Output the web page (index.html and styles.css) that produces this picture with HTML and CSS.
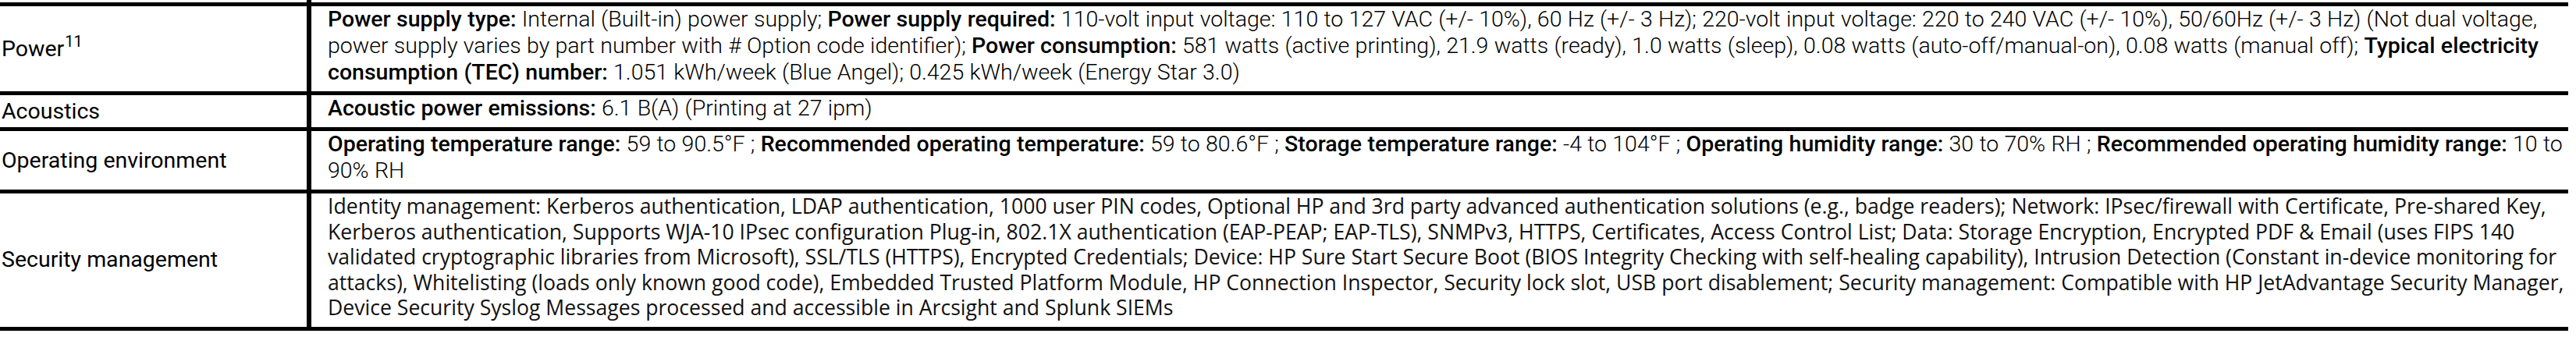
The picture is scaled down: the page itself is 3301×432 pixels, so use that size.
FILE: index.html
```html
<!DOCTYPE html>
<html lang="en">
<head>
<meta charset="utf-8">
<title>Specifications</title>
<link rel="stylesheet" href="styles.css">
</head>
<body>
<div class="spec">
  <div class="row stub"><div class="label"></div><div class="value"></div></div>
  <div class="row">
    <div class="label"><span>Power<sup>11</sup></span></div>
    <div class="value"><b>Power supply type:</b> Internal (Built-in) power supply; <b>Power supply required:</b> 110-volt input voltage: 110 to 127 VAC (+/- 10%), 60 Hz (+/- 3 Hz); 220-volt input voltage: 220 to 240 VAC (+/- 10%), 50/60Hz (+/- 3 Hz) (Not dual voltage,<br>power supply varies by part number with # Option code identifier); <b>Power consumption:</b> 581 watts (active printing), 21.9 watts (ready), 1.0 watts (sleep), 0.08 watts (auto-off/manual-on), 0.08 watts (manual off); <b>Typical electricity</b><br><b>consumption (TEC) number:</b> 1.051 kWh/week (Blue Angel); 0.425 kWh/week (Energy Star 3.0)</div>
  </div>
  <div class="row">
    <div class="label">Acoustics</div>
    <div class="value"><b>Acoustic power emissions:</b> 6.1 B(A) (Printing at 27 ipm)</div>
  </div>
  <div class="row">
    <div class="label">Operating environment</div>
    <div class="value"><b>Operating temperature range:</b> 59 to 90.5°F ; <b>Recommended operating temperature:</b> 59 to 80.6°F ; <b>Storage temperature range:</b> -4 to 104°F ; <b>Operating humidity range:</b> 30 to 70% RH ; <b>Recommended operating humidity range:</b> 10 to<br>90% RH</div>
  </div>
  <div class="row">
    <div class="label">Security management</div>
    <div class="value security">Identity management: Kerberos authentication, LDAP authentication, 1000 user PIN codes, Optional HP and 3rd party advanced authentication solutions (e.g., badge readers); Network: IPsec/firewall with Certificate, Pre-shared Key,<br>Kerberos authentication, Supports WJA-10 IPsec configuration Plug-in, 802.1X authentication (EAP-PEAP; EAP-TLS), SNMPv3, HTTPS, Certificates, Access Control List; Data: Storage Encryption, Encrypted PDF &amp; Email (uses FIPS 140<br>validated cryptographic libraries from Microsoft), SSL/TLS (HTTPS), Encrypted Credentials; Device: HP Sure Start Secure Boot (BIOS Integrity Checking with self-healing capability), Intrusion Detection (Constant in-device monitoring for<br>attacks), Whitelisting (loads only known good code), Embedded Trusted Platform Module, HP Connection Inspector, Security lock slot, USB port disablement; Security management: Compatible with HP JetAdvantage Security Manager,<br>Device Security Syslog Messages processed and accessible in Arcsight and Splunk SIEMs</div>
  </div>
</div>
</body>
</html>
```
FILE: styles.css
```css
* { box-sizing: border-box; }

body {
  margin: 0;
  background: #ffffff;
}

.spec {
  width: 3291px;
  font-family: Roboto, "Liberation Sans", sans-serif;
  color: #000000;
}

.row {
  display: grid;
  grid-template-columns: 399px 1fr;
  border-bottom: 5px solid #000000;
}

.label {
  border-right: 6px solid #000000;
  padding-left: 2px;
  display: flex;
  align-items: center;
  font-size: 28.5px;
  font-weight: 400;
  line-height: 34px;
}

.label sup {
  font-size: 20px;
  line-height: 0;
  vertical-align: 12px;
  margin-left: 1px;
}

.value {
  padding: 0 0 7px 21px;
  font-size: 28.5px;
  line-height: 34px;
  font-weight: 300;
  word-spacing: 0.3px;
}

.value b {
  font-weight: 500;
}

.stub .label,
.stub .value {
  height: 3px;
  padding: 0;
}

.value.security {
  font-family: "Open Sans", "Noto Sans", sans-serif;
  font-size: 26.6px;
  line-height: 32.6px;
  font-weight: 400;
  word-spacing: 0;
  padding-bottom: 8px;
  color: #111111;
}
```
